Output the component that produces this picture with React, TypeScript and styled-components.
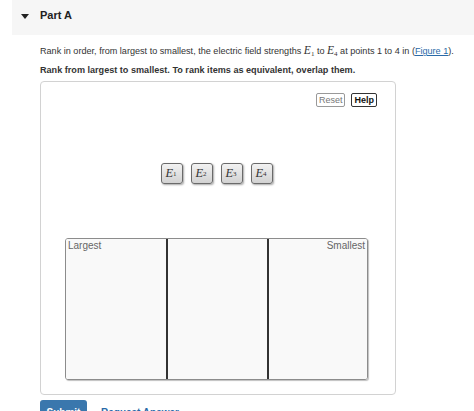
import React from 'react';
import styled, { createGlobalStyle } from 'styled-components';

const Global = createGlobalStyle`
  html, body {
    margin: 0;
    padding: 0;
    background: #fff;
    font-family: "Liberation Sans", Arial, sans-serif;
    color: #222;
  }
`;

const Page = styled.div`
  width: 474px;
  height: 411px;
  overflow: hidden;
`;

const PartHeader = styled.div`
  margin-left: 12px;
  height: 35px;
  background: #f6f6f6;
  display: flex;
  align-items: center;
  padding-left: 9px;
  gap: 11px;
`;

const Caret = styled.span`
  width: 0;
  height: 0;
  border-left: 4px solid transparent;
  border-right: 4px solid transparent;
  border-top: 5px solid #222;
  margin-top: -3px;
`;

const PartTitle = styled.span`
  font-weight: bold;
  font-size: 11px;
  color: #222;
  margin-top: -5px;
`;

const Body = styled.div`
  padding-left: 40px;
`;

const Prompt = styled.p`
  margin: 9px 0 0;
  height: 14px;
  font-size: 9.1px;
  line-height: 14px;
  color: #333;
  white-space: nowrap;
`;

const Instruction = styled.p`
  margin: 6px 0 0;
  height: 13px;
  font-size: 9.1px;
  line-height: 13px;
  font-weight: bold;
  color: #333;
  white-space: nowrap;
`;

const MathVar = styled.span`
  font-family: "Liberation Serif", "Times New Roman", serif;
  font-style: italic;
  font-size: 11.5px;
  line-height: 0;
  sub {
    font-style: normal;
    font-size: 7px;
    line-height: 0;
    vertical-align: -2px;
  }
`;

const FigureLink = styled.a`
  color: #2a6aa8;
  text-decoration: underline;
`;

const Workspace = styled.div`
  margin-top: 4px;
  width: 356px;
  height: 314px;
  box-sizing: border-box;
  border: 1px solid #d2d2d2;
  border-radius: 4px;
  padding: 11px 27px 14px 24px;
  display: flex;
  flex-direction: column;
`;

const Toolbar = styled.div`
  display: flex;
  justify-content: flex-end;
  gap: 6px;
  margin-right: -9px;
`;

const ToolButton = styled.button<{ $strong?: boolean }>`
  font-family: "Liberation Sans", Arial, sans-serif;
  font-size: 9px;
  height: 14px;
  padding: 0 2px;
  line-height: 12px;
  background: #fff;
  border: 1px solid ${p => (p.$strong ? '#333' : '#999')};
  color: ${p => (p.$strong ? '#111' : '#777')};
  font-weight: ${p => (p.$strong ? 'bold' : 'normal')};
  border-radius: 2px;
`;

const TileRow = styled.div`
  margin-top: 56px;
  display: flex;
  justify-content: center;
  gap: 8px;
  padding-left: 1px;
`;

const Tile = styled.div`
  width: 22px;
  height: 21px;
  box-sizing: border-box;
  border: 1px solid #6a6a6a;
  border-radius: 3px;
  background: linear-gradient(#f2f2f2, #d2d2d2);
  box-shadow: 1px 1px 2px rgba(0, 0, 0, 0.35);
  display: flex;
  align-items: center;
  justify-content: center;
  font-family: "Liberation Serif", "Times New Roman", serif;
  font-style: italic;
  font-size: 12.5px;
  color: #333;
  padding-right: 2px;
  sub {
    font-style: normal;
    font-size: 7px;
    vertical-align: -3px;
  }
`;

const Bins = styled.div`
  margin-top: auto;
  height: 140px;
  display: grid;
  grid-template-columns: 1fr 1fr 1fr;
  border: 1px solid #8c8c8c;
  border-radius: 3px;
  box-shadow: 1px 1px 1px rgba(0, 0, 0, 0.25);
  overflow: hidden;
`;

const Bin = styled.div<{ $align: 'left' | 'right' }>`
  background: #f9f9f9;
  border-left: 2px solid #333;
  padding: 0 2px;
  font-size: 10px;
  line-height: 13px;
  color: #666;
  text-align: ${p => p.$align};
  &:first-child {
    border-left: none;
  }
`;

const Actions = styled.div`
  margin-top: 5px;
  display: flex;
  align-items: center;
  gap: 14px;
`;

const SubmitButton = styled.button`
  width: 47px;
  height: 24px;
  border: none;
  border-radius: 3px;
  background: #3a77ad;
  color: #fff;
  font-family: "Liberation Sans", Arial, sans-serif;
  font-size: 10px;
  font-weight: bold;
`;

const RequestLink = styled.a`
  color: #2a6aa8;
  font-size: 10px;
  font-weight: bold;
`;

const Sym = ({ n }: { n: number }) => (
  <MathVar>
    E<sub>{n}</sub>
  </MathVar>
);

export default function App() {
  return (
    <Page>
      <Global />
      <PartHeader>
        <Caret />
        <PartTitle>Part A</PartTitle>
      </PartHeader>
      <Body>
        <Prompt>
          Rank in order, from largest to smallest, the electric field strengths <Sym n={1} /> to{' '}
          <Sym n={4} /> at points 1 to 4 in (<FigureLink>Figure 1</FigureLink>).
        </Prompt>
        <Instruction>Rank from largest to smallest. To rank items as equivalent, overlap them.</Instruction>
        <Workspace>
          <Toolbar>
            <ToolButton>Reset</ToolButton>
            <ToolButton $strong>Help</ToolButton>
          </Toolbar>
          <TileRow>
            {[1, 2, 3, 4].map(n => (
              <Tile key={n}>
                E<sub>{n}</sub>
              </Tile>
            ))}
          </TileRow>
          <Bins>
            <Bin $align="left">Largest</Bin>
            <Bin $align="left" />
            <Bin $align="right">Smallest</Bin>
          </Bins>
        </Workspace>
        <Actions>
          <SubmitButton>Submit</SubmitButton>
          <RequestLink>Request Answer</RequestLink>
        </Actions>
      </Body>
    </Page>
  );
}
